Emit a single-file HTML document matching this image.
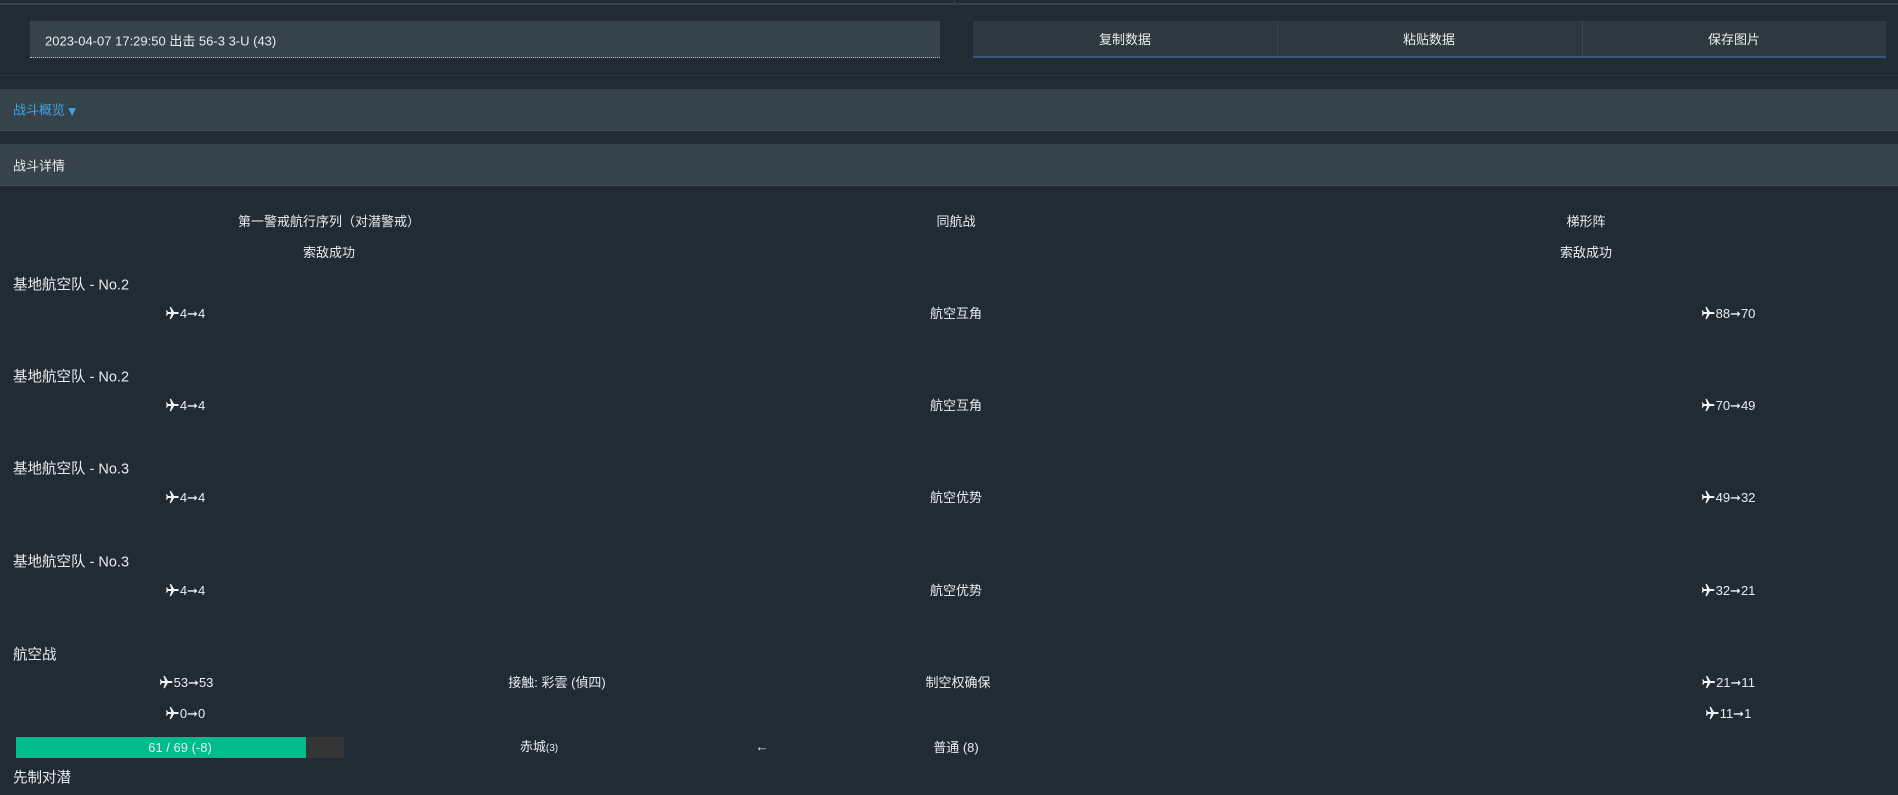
<!DOCTYPE html>
<html><head><meta charset="utf-8"><style>
html,body{margin:0;padding:0;}
body{width:1898px;height:795px;background:#212b34;position:relative;overflow:hidden;font-family:"Liberation Sans","Noto Sans CJK SC",sans-serif;color:#e8ecef;font-size:13px;}
.a{position:absolute;white-space:nowrap;}
.c{position:absolute;white-space:nowrap;transform:translate(-50%,-50%);line-height:16px;}
.l{position:absolute;white-space:nowrap;transform:translateY(-50%);left:13px;font-size:14.5px;}
.p{display:inline-block;width:15px;height:14px;vertical-align:-2px;}
</style></head><body>
<svg width="0" height="0" style="position:absolute"><defs><symbol id="pl" viewBox="0 0 16 16"><path fill="#f2f4f6" d="M15.5 8c0-.8-1-1.2-2-1.2H10L6.5 1H5l1.8 5.8H3.2L2 5H.8l.7 3-.7 3H2l1.2-1.8h3.6L5 15h1.5L10 9.2h3.5c1 0 2-.4 2-1.2z"/></symbol></defs></svg>
<div class="a" style="left:0;top:3px;width:1898px;height:2px;background:#36424a"></div>
<div class="a" style="left:954px;top:0;width:1px;height:4px;background:#36424a"></div>
<div class="a" style="left:30px;top:21px;width:910px;height:36px;background:#37434a;border-bottom:1px dotted #b8c0c6"></div>
<div class="a" style="left:45px;top:40px;transform:translateY(-50%);font-size:13px">2023-04-07 17:29:50 出击 56-3 3-U (43)</div>
<div class="a" style="left:973px;top:21px;width:913px;height:35px;background:#2d383f;border-bottom:2px solid #34577e"></div>
<div class="a" style="left:1277px;top:21px;width:1px;height:35px;background:#3b474f"></div>
<div class="a" style="left:1582px;top:21px;width:1px;height:35px;background:#3b474f"></div>
<div class="c" style="left:1125px;top:40px">复制数据</div>
<div class="c" style="left:1429px;top:40px">粘贴数据</div>
<div class="c" style="left:1734px;top:40px">保存图片</div>
<div class="a" style="left:0;top:75px;width:1898px;height:1px;background:#2d383f"></div>
<div class="a" style="left:0;top:89px;width:1898px;height:41px;background:#37434a;border-bottom:1px solid #434f57"></div>
<div class="a" style="left:13px;top:109px;transform:translateY(-50%);color:#3fa4e0">战斗概览<span style="font-size:10px;font-family:'DejaVu Sans'"> ▼</span></div>
<div class="a" style="left:0;top:144px;width:1898px;height:41px;background:#37434a;border-bottom:1px solid #434f57"></div>
<div class="a" style="left:13px;top:165px;transform:translateY(-50%)">战斗详情</div>

<div class="c" style="left:329px;top:222px">第一警戒航行序列（对潜警戒）</div>
<div class="c" style="left:956px;top:222px">同航战</div>
<div class="c" style="left:1586px;top:222px">梯形阵</div>
<div class="c" style="left:329px;top:253px">索敌成功</div>
<div class="c" style="left:1586px;top:253px">索敌成功</div>

<div class="l" style="top:284px">基地航空队 - No.2</div>
<div class="c" style="left:185px;top:314px"><svg class="p"><use href="#pl"/></svg>4➞4</div>
<div class="c" style="left:956px;top:314px">航空互角</div>
<div class="c" style="left:1728px;top:314px"><svg class="p"><use href="#pl"/></svg>88➞70</div>

<div class="l" style="top:376px">基地航空队 - No.2</div>
<div class="c" style="left:185px;top:406px"><svg class="p"><use href="#pl"/></svg>4➞4</div>
<div class="c" style="left:956px;top:406px">航空互角</div>
<div class="c" style="left:1728px;top:406px"><svg class="p"><use href="#pl"/></svg>70➞49</div>

<div class="l" style="top:468px">基地航空队 - No.3</div>
<div class="c" style="left:185px;top:498px"><svg class="p"><use href="#pl"/></svg>4➞4</div>
<div class="c" style="left:956px;top:498px">航空优势</div>
<div class="c" style="left:1728px;top:498px"><svg class="p"><use href="#pl"/></svg>49➞32</div>

<div class="l" style="top:561px">基地航空队 - No.3</div>
<div class="c" style="left:185px;top:591px"><svg class="p"><use href="#pl"/></svg>4➞4</div>
<div class="c" style="left:956px;top:591px">航空优势</div>
<div class="c" style="left:1728px;top:591px"><svg class="p"><use href="#pl"/></svg>32➞21</div>

<div class="l" style="top:654px">航空战</div>
<div class="c" style="left:186px;top:683px"><svg class="p"><use href="#pl"/></svg>53➞53</div>
<div class="c" style="left:557px;top:683px">接触: 彩雲 (偵四)</div>
<div class="c" style="left:958px;top:683px">制空权确保</div>
<div class="c" style="left:1728px;top:683px"><svg class="p"><use href="#pl"/></svg>21➞11</div>
<div class="c" style="left:185px;top:714px"><svg class="p"><use href="#pl"/></svg>0➞0</div>
<div class="c" style="left:1728px;top:714px"><svg class="p"><use href="#pl"/></svg>11➞1</div>

<div class="a" style="left:16px;top:737px;width:328px;height:21px;background:#353535"></div>
<div class="a" style="left:16px;top:737px;width:290px;height:21px;background:#00bc8c"></div>
<div class="c" style="left:180px;top:748px">61 / 69 (-8)</div>
<div class="c" style="left:539px;top:748px">赤城<span style="font-size:10px">(3)</span></div>
<div class="c" style="left:762px;top:747px;font-weight:bold">←</div>
<div class="c" style="left:956px;top:748px">普通 (8)</div>
<div class="l" style="top:777px">先制对潜</div>
</body></html>
